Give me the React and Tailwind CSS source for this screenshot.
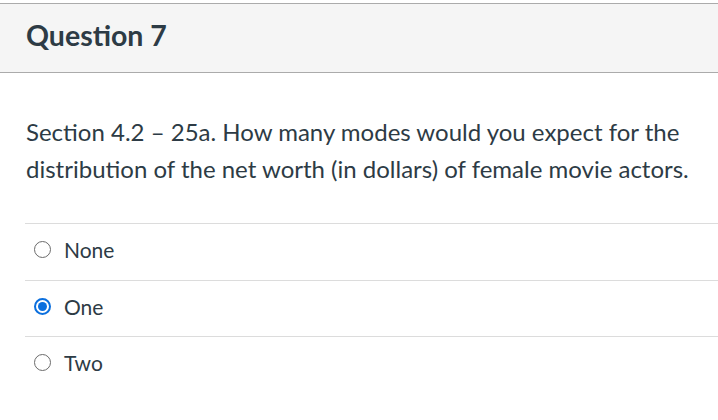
import { useState } from "react";

const answers = ["None", "One", "Two"];

function Radio({ checked }) {
  return (
    <span
      className={
        "flex h-[17px] w-[17px] shrink-0 items-center justify-center rounded-full border " +
        (checked ? "border-[2px] border-[#0b6fde] bg-white" : "border-[#6b6b6b] bg-white")
      }
    >
      {checked && <span className="h-[9px] w-[9px] rounded-full bg-[#0b6fde]" />}
    </span>
  );
}

export default function App() {
  const [selected, setSelected] = useState("One");

  return (
    <div className="min-h-screen bg-white text-[#2d3b45]" style={{ fontFamily: "Lato, 'Noto Sans', sans-serif" }}>
      {/* header */}
      <div className="mt-[3px] flex h-[70px] items-center border-y border-[#ababab] bg-[#f5f5f5] pb-[6px] pl-[26px]">
        <h2 className="text-[28.5px] font-bold leading-none">Question 7</h2>
      </div>

      {/* question text */}
      <div className="pt-[40px] pr-[26px] pb-[36px] pl-[26px]">
        <p className="text-[24px] leading-[37px]">
          Section 4.2 – 25a. How many modes would you expect for the distribution of the net worth (in dollars) of
          female movie actors.
        </p>
      </div>

      {/* answers */}
      <div className="ml-[25px]">
        {answers.map((a) => (
          <label
            key={a}
            onClick={() => setSelected(a)}
            className="flex h-[56.5px] cursor-pointer items-center gap-[13px] border-t border-[#dcdcdc] pb-[4px] pl-[9px]"
          >
            <Radio checked={selected === a} />
            <span className="text-[21px]">{a}</span>
          </label>
        ))}
      </div>
    </div>
  );
}
